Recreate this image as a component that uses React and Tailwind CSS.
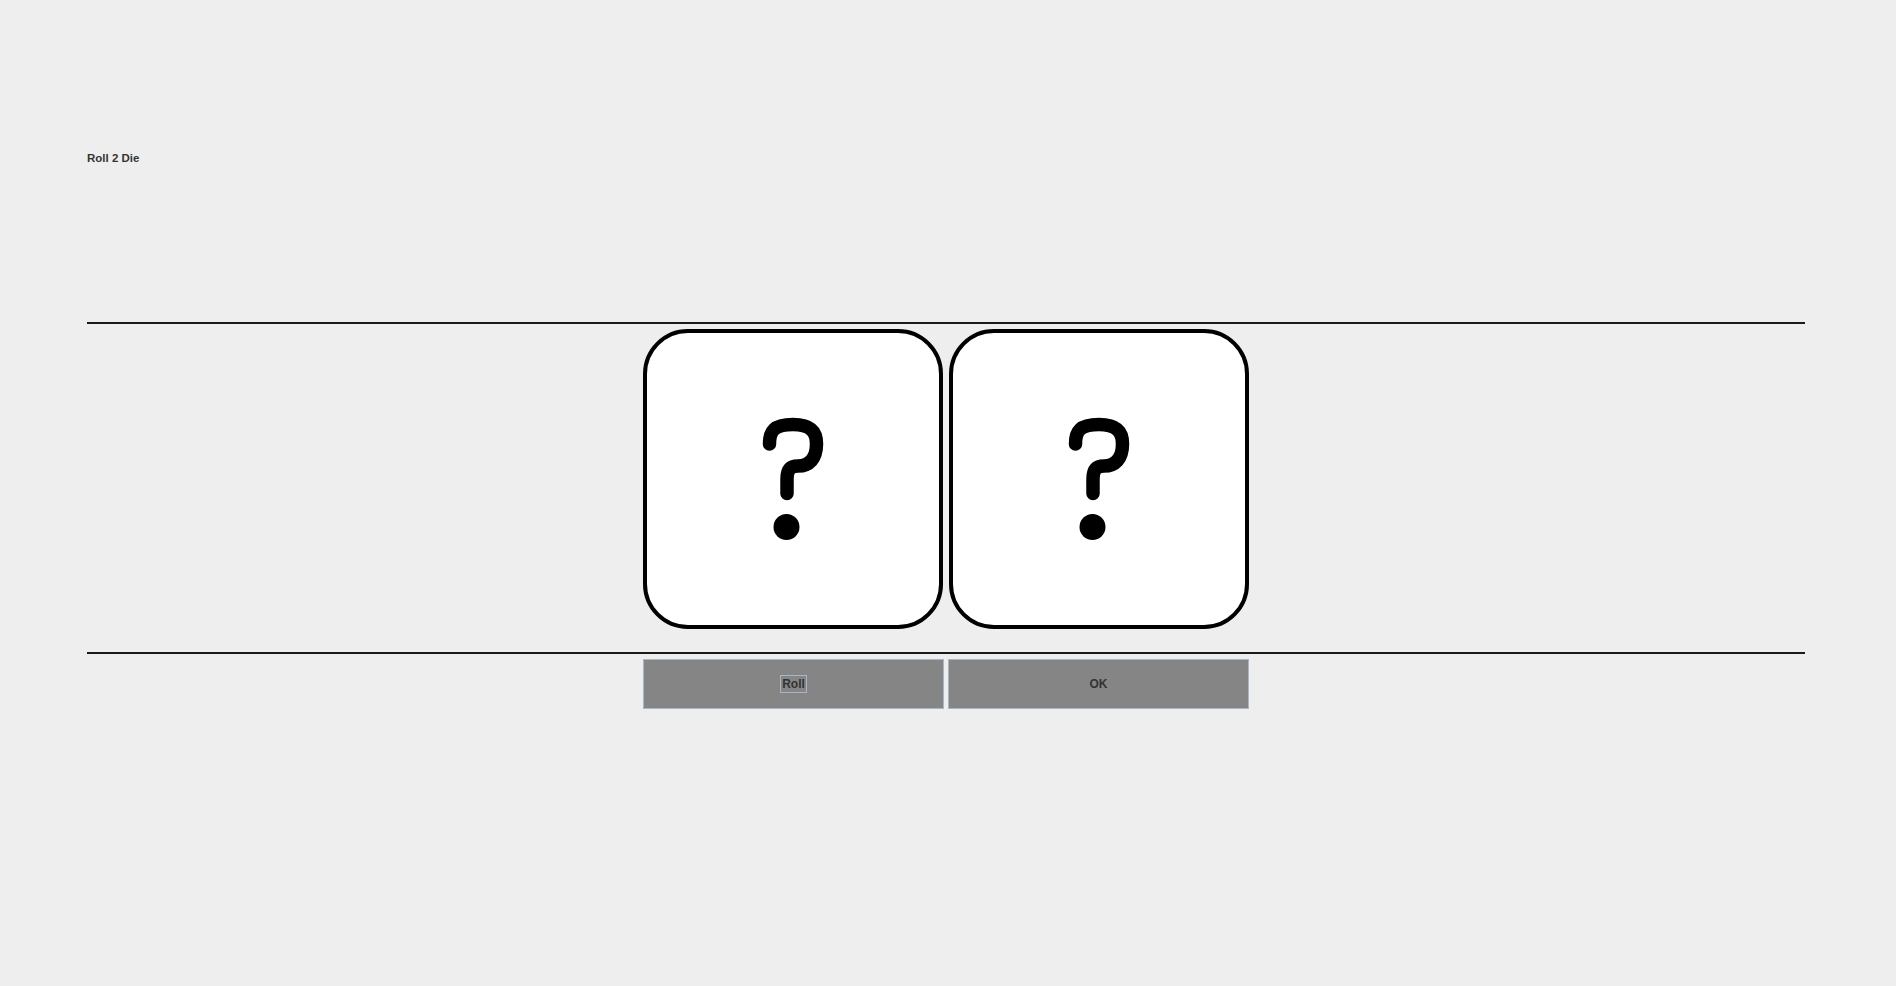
import React from 'react';

function Die() {
  return (
    <div className="box-border w-[300px] h-[300px] border-[4px] border-black rounded-[45px] bg-white overflow-hidden">
      <svg viewBox="4 4 292 292" className="w-full h-full block">
        <path
          d="M126.5 115 C126.5 102 131 95.5 150 95.5 C169 95.5 173.5 104 173.5 115 C173.5 130 166 137 155 137 C147 137 144 141 144 150 V164.5"
          fill="none"
          stroke="#000"
          strokeWidth="13.5"
          strokeLinecap="round"
          strokeLinejoin="round"
        />
        <circle cx="143.5" cy="198" r="13" fill="#000" />
      </svg>
    </div>
  );
}

export default function App() {
  return (
    <div
      className="min-h-[986px] w-full bg-[#eeeeee] pl-[87px] pr-[91px] pt-[151px]"
      style={{ fontFamily: '"Liberation Sans", Arial, sans-serif' }}
    >
      <div className="text-[11.5px] leading-[14px] font-bold text-[#333333]">Roll 2 Die</div>

      <div className="mt-[157px] h-[2px] bg-[#1a1a1a]" />

      <div className="mt-[5px] flex justify-center gap-[6px]">
        <Die />
        <Die />
      </div>

      <div className="mt-[23px] h-[2px] bg-[#1a1a1a]" />

      <div className="mt-[5px] flex justify-center gap-[4px]">
        <button className="box-border w-[301px] h-[50px] bg-[#858585] border border-[#a6b6c8] flex items-center justify-center">
          <span className="text-[12px] leading-[14px] font-bold text-[#333333] border border-[#a6b6c8] px-[1px] py-[1px]">Roll</span>
        </button>
        <button className="box-border w-[301px] h-[50px] bg-[#858585] border border-[#a6b6c8] flex items-center justify-center">
          <span className="text-[12px] leading-[14px] font-bold text-[#333333]">OK</span>
        </button>
      </div>
    </div>
  );
}
